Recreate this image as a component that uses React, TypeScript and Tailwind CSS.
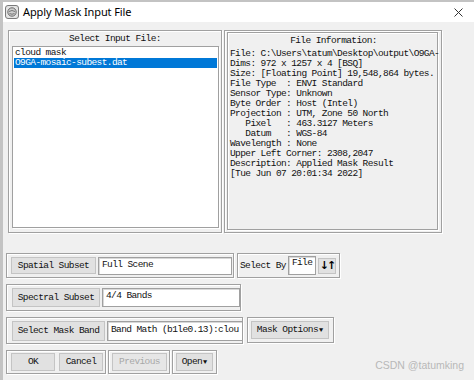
import React from 'react';

const mono = "font-['Liberation_Mono',monospace] text-[9.5px] tracking-[-0.6px] text-[#111] leading-[10px]";
const frame = 'border border-[#a0a0a0] shadow-[inset_1px_1px_0_#fff,1px_1px_0_#fff]';
const btn = 'flex items-center justify-center bg-[#e1e1e1] border border-[#c4c4c4]';
const field = 'bg-white border border-[#a0a0a0] shadow-[inset_1px_1px_0_#d8d8d8]';

const info = [
  'File: C:\\Users\\tatum\\Desktop\\output\\O9GA-',
  'Dims: 972 x 1257 x 4 [BSQ]',
  'Size: [Floating Point] 19,548,864 bytes.',
  'File Type  : ENVI Standard',
  'Sensor Type: Unknown',
  'Byte Order : Host (Intel)',
  'Projection : UTM, Zone 50 North',
  '   Pixel   : 463.3127 Meters',
  '   Datum   : WGS-84',
  'Wavelength : None',
  'Upper Left Corner: 2308,2047',
  'Description: Applied Mask Result',
  '[Tue Jun 07 20:01:34 2022]',
];

function AppIcon() {
  return (
    <svg width="14" height="14" viewBox="0 0 14 14">
      <rect x="0.5" y="0.5" width="13" height="13" rx="2.5" fill="#e4e4e4" stroke="#7a7a7a" />
      <circle cx="7" cy="7" r="4.2" fill="#cfcfcf" stroke="#6a6a6a" />
      <path d="M4 6.5 Q7 4.5 10 6.5 M4.5 8.5 Q7 10 9.5 8.5" fill="none" stroke="#6a6a6a" strokeWidth="0.9" />
    </svg>
  );
}

export default function App() {
  return (
    <div className="relative w-[474px] h-[380px] overflow-hidden bg-[#f0f0f0] border-l-[3px] border-t-[2px] border-[#c3c3c3]">
      {/* title bar */}
      <div className="h-[20px] bg-white flex items-center pl-[2px]">
        <AppIcon />
        <span className="ml-[4px] font-['Noto_Sans',sans-serif] text-[11px] tracking-[-0.1px] text-black">Apply Mask Input File</span>
        <svg className="ml-auto mr-[11px]" width="9" height="9" viewBox="0 0 9 9">
          <path d="M0.5 0.5 L8.5 8.5 M8.5 0.5 L0.5 8.5" stroke="#333" strokeWidth="1" />
        </svg>
      </div>

      {/* file list + info */}
      <div className="flex gap-[2px] ml-[5px] mt-[8px]">
        <div className={`${frame} w-[214px] h-[203px] flex flex-col`}>
          <div className={`${mono} h-[15px] flex items-center justify-center`}>Select Input File:</div>
          <div className={`${frame} ml-[3px] w-[207px] h-[182px] bg-white pt-[1px] px-[1px]`}>
            <div className={`${mono} whitespace-pre pl-[1px] h-[10px]`}>cloud mask</div>
            <div className={`${mono} whitespace-pre pl-[1px] h-[10px] bg-[#0078d7] text-white`}>O9GA-mosaic-subest.dat</div>
          </div>
        </div>
        <div className={`${frame} w-[218px] h-[203px]`}>
          <div className={`${frame} ml-[2px] mt-[1px] w-[211px] h-[198px] pl-[2px]`}>
            <div className={`${mono} h-[16px] flex items-center justify-center`}>File Information:</div>
            {info.map((line) => (
              <div key={line} className={`${mono} whitespace-pre h-[10px]`}>{line}</div>
            ))}
          </div>
        </div>
      </div>

      {/* options rows */}
      <div className="pl-[3px] mt-[20px] flex flex-col gap-[6px]">
        <div className="flex gap-[3px]">
          <div className={`${frame} w-[228px] h-[25px] flex items-center pl-[4px] gap-[2px]`}>
            <div className={`${btn} ${mono} w-[85px] h-[17px]`}>Spatial Subset</div>
            <div className={`${field} ${mono} flex-1 h-[18px] pl-[3px] pt-[2px] mr-[1px]`}>Full Scene</div>
          </div>
          <div className={`${frame} w-[103px] h-[25px] flex items-center pl-[2px]`}>
            <span className={`${mono} whitespace-pre`}>Select By</span>
            <div className={`${field} ${mono} ml-[2px] w-[28px] h-[19px] pl-[3px] pt-[1px]`}>File</div>
            <div className={`${btn} ml-[2px] w-[18px] h-[16px] text-[11px] font-bold leading-none text-black font-['DejaVu_Sans',sans-serif] tracking-[-2px]`}>↓↑</div>
          </div>
        </div>

        <div className="flex">
          <div className={`${frame} w-[235px] h-[27px] flex items-center pl-[5px] gap-[2px]`}>
            <div className={`${btn} ${mono} w-[88px] h-[19px]`}>Spectral Subset</div>
            <div className={`${field} ${mono} flex-1 h-[19px] pl-[3px] pt-[2px]`}>4/4 Bands</div>
          </div>
        </div>

        <div className="flex gap-[4px]">
          <div className={`${frame} w-[237px] h-[27px] flex items-center pl-[5px] gap-[2px] overflow-hidden`}>
            <div className={`${btn} ${mono} w-[93px] h-[20px] shrink-0`}>Select Mask Band</div>
            <div className={`${field} ${mono} w-[138px] shrink-0 h-[20px] pl-[3px] pt-[3px] whitespace-pre overflow-hidden`}>Band Math (b1le0.13):clou</div>
          </div>
          <div className={`${frame} w-[87px] h-[26px] flex items-center pl-[3px]`}>
            <div className={`${btn} ${mono} w-[78px] h-[18px] gap-[1px]`}>
              <span>Mask Options</span><span className="text-[7px] tracking-normal">▼</span>
            </div>
          </div>
        </div>

        <div className="flex gap-[2px]">
          <div className={`${frame} w-[100px] h-[24px] flex items-center pl-[4px] gap-[4px]`}>
            <div className={`${btn} ${mono} w-[44px] h-[18px]`}>OK</div>
            <div className={`${btn} ${mono} w-[44px] h-[18px]`}>Cancel</div>
          </div>
          <div className={`${frame} w-[62px] h-[24px] flex items-center pl-[3px]`}>
            <div className={`${btn} ${mono} w-[55px] h-[18px] !text-[#a8a8a8] bg-[#e6e6e6]`}>Previous</div>
          </div>
          <div className={`${frame} w-[45px] h-[24px] flex items-center pl-[3px]`}>
            <div className={`${btn} ${mono} w-[37px] h-[18px] gap-[1px]`}>
              <span>Open</span><span className="text-[7px] tracking-normal">▼</span>
            </div>
          </div>
        </div>
      </div>

      <span className="absolute right-[10px] bottom-[6px] font-['Liberation_Sans',sans-serif] text-[10.5px] text-[#b8b8b8]">CSDN @tatumking</span>
    </div>
  );
}
